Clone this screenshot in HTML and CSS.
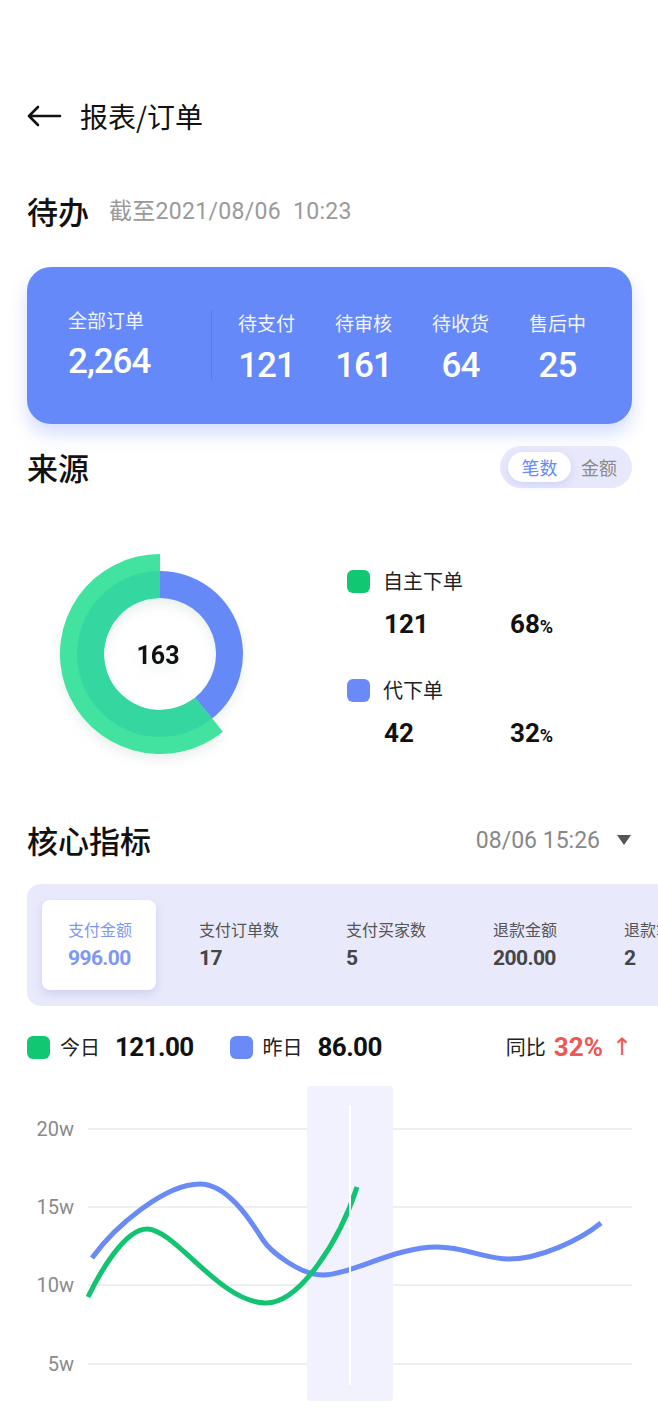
FILE: index.html
```html
<!DOCTYPE html>
<html lang="zh-CN">
<head>
<meta charset="utf-8">
<title>报表/订单</title>
<link rel="stylesheet" href="styles.css">
</head>
<body>
<div class="page">
  <header class="topbar">
    <svg class="back" width="36" height="22" viewBox="0 0 36 22"><path d="M3 11H34M12 2L3 11L12 20" fill="none" stroke="#111" stroke-width="2.6" stroke-linecap="round" stroke-linejoin="round"/></svg>
    <h1 class="topbar-title">报表/订单</h1>
  </header>

  <div class="section-head todo-head">
    <h2 class="section-title">待办</h2>
    <span class="section-sub">截至2021/08/06&nbsp;&nbsp;10:23</span>
  </div>

  <div class="todo-card">
    <div class="todo-all">
      <div class="todo-label">全部订单</div>
      <div class="todo-num">2,264</div>
    </div>
    <div class="todo-divider"></div>
    <div class="todo-cols">
      <div class="todo-col"><div class="todo-label">待支付</div><div class="todo-num">121</div></div>
      <div class="todo-col"><div class="todo-label">待审核</div><div class="todo-num">161</div></div>
      <div class="todo-col"><div class="todo-label">待收货</div><div class="todo-num">64</div></div>
      <div class="todo-col"><div class="todo-label">售后中</div><div class="todo-num">25</div></div>
    </div>
  </div>

  <div class="section-head source-head">
    <h2 class="section-title">来源</h2>
    <div class="toggle">
      <span class="toggle-item active">笔数</span>
      <span class="toggle-item">金额</span>
    </div>
  </div>

  <div class="source-body">
    <div class="donut">
      <svg width="220" height="220" viewBox="0 0 220 220">
        <path d="M172.93 187.71 A100 100 0 1 1 110 10 L110 54 A56 56 0 1 0 145.24 153.52 Z" fill="#42e3a0"/>
        <path d="M162.23 174.5 A83 83 0 1 1 110 27 L110 54 A56 56 0 1 0 145.24 153.52 Z" fill="#35d7a0"/>
        <path d="M110 27 A83 83 0 0 1 162.23 174.5 L145.24 153.52 A56 56 0 0 0 110 54 Z" fill="#6689f8"/>
      </svg>
      <span class="donut-num">163</span>
    </div>
    <div class="legend">
      <div class="legend-item">
        <div class="legend-label"><i class="swatch swatch-green"></i>自主下单</div>
        <div class="legend-values"><span class="lv-num">121</span><span class="lv-pct">68<small>%</small></span></div>
      </div>
      <div class="legend-item">
        <div class="legend-label"><i class="swatch swatch-blue"></i>代下单</div>
        <div class="legend-values"><span class="lv-num">42</span><span class="lv-pct">32<small>%</small></span></div>
      </div>
    </div>
  </div>

  <div class="section-head core-head">
    <h2 class="section-title">核心指标</h2>
    <div class="core-date">08/06 15:26<span class="caret"></span></div>
  </div>

  <div class="metrics">
    <div class="metric active"><div class="metric-label">支付金额</div><div class="metric-value">996.00</div></div>
    <div class="metric"><div class="metric-label">支付订单数</div><div class="metric-value">17</div></div>
    <div class="metric"><div class="metric-label">支付买家数</div><div class="metric-value">5</div></div>
    <div class="metric"><div class="metric-label">退款金额</div><div class="metric-value">200.00</div></div>
    <div class="metric"><div class="metric-label">退款笔数</div><div class="metric-value">2</div></div>
  </div>

  <div class="compare">
    <div class="compare-item"><i class="swatch swatch-green"></i><span class="compare-label">今日</span><span class="compare-num">121.00</span></div>
    <div class="compare-item compare-y"><i class="swatch swatch-blue"></i><span class="compare-label">昨日</span><span class="compare-num">86.00</span></div>
    <div class="compare-ratio"><span class="compare-label">同比</span><span class="ratio-num">32%</span><span class="ratio-arrow">↑</span></div>
  </div>

  <svg class="chart" width="658" height="339" viewBox="0 1086 658 339">
    <g stroke="#e9e9ec" stroke-width="1.5">
      <line x1="88" y1="1129" x2="632" y2="1129"/>
      <line x1="88" y1="1207" x2="632" y2="1207"/>
      <line x1="88" y1="1285" x2="632" y2="1285"/>
      <line x1="88" y1="1364" x2="632" y2="1364"/>
    </g>
    <g class="axis-label" fill="#8a8a8a" font-size="20" text-anchor="end">
      <text x="74" y="1136">20w</text>
      <text x="74" y="1214">15w</text>
      <text x="74" y="1292">10w</text>
      <text x="74" y="1371">5w</text>
    </g>
    <rect x="307" y="1086" width="86" height="315" rx="3" fill="#f1f2fd"/>
    <path d="M92 1258 C115 1226 165 1184 200 1184 C230 1184 255 1228 263 1240 C271 1252 300 1275 323 1275 C350 1275 395 1247 437 1247 C465 1247 485 1259 509 1259 C540 1259 580 1240 601 1223" fill="none" stroke="#6a8af6" stroke-width="5" stroke-linecap="butt"/>
    <path d="M88 1297 C100 1272 125 1229 147 1229 C175 1229 220 1303 266 1303 C300 1303 340 1240 357 1187" fill="none" stroke="#12c471" stroke-width="5" stroke-linecap="butt"/>
    <line x1="350" y1="1105" x2="350" y2="1385" stroke="#ffffff" stroke-width="2"/>
  </svg>
</div>
</body>
</html>
```

FILE: styles.css
```css
html, body {
  margin: 0;
  padding: 0;
  background: #ffffff;
}
body {
  font-family: "Noto Sans CJK SC", "Noto Sans", sans-serif;
  color: #111;
  overflow-x: hidden;
}
.page {
  padding: 0 26px 0 27px;
  width: 658px;
  box-sizing: border-box;
  overflow: hidden;
}

/* top bar */
.topbar {
  margin-top: 96px;
  height: 40px;
  display: flex;
  align-items: center;
}
.back {
  display: block;
  margin-left: -1px;
}
.topbar-title {
  margin: 0 0 0 18px;
  font-size: 28px;
  font-weight: 400;
  line-height: 40px;
  color: #111;
}

/* section heads */
.section-head {
  display: flex;
  align-items: center;
}
.section-title {
  margin: 0;
  font-size: 31px;
  font-weight: 500;
  line-height: 40px;
  color: #111;
}
.todo-head {
  margin-top: 55px;
  height: 40px;
}
.section-sub {
  margin-left: 20px;
  font-family: Roboto, "Noto Sans CJK SC", sans-serif;
  font-size: 23px;
  letter-spacing: 0.3px;
  color: #9a9a9a;
  line-height: 40px;
  padding-top: 2px;
}

/* todo card */
.todo-card {
  margin-top: 36px;
  height: 157px;
  border-radius: 24px;
  background: #6689f9;
  box-shadow: 0 10px 18px rgba(102, 137, 249, 0.28);
  display: flex;
  align-items: flex-start;
  color: #fff;
  box-sizing: border-box;
  padding-left: 41px;
}
.todo-all {
  width: 143px;
  padding-top: 41px;
}
.todo-divider {
  width: 1px;
  height: 70px;
  margin-top: 43px;
  background: #587ae6;
}
.todo-cols {
  margin-left: 6px;
  display: grid;
  grid-template-columns: repeat(4, 97px);
  padding-top: 44px;
}
.todo-col {
  text-align: center;
}
.todo-label {
  font-size: 19px;
  line-height: 24px;
  color: #f2f5ff;
}
.todo-num {
  margin-top: 10px;
  font-family: Roboto, sans-serif;
  font-size: 35px;
  font-weight: 500;
  line-height: 40px;
  letter-spacing: -1px;
}
.todo-col .todo-num {
  margin-top: 11px;
}

/* source */
.source-head {
  margin-top: 22px;
  height: 42px;
  justify-content: space-between;
}
.toggle {
  width: 132px;
  height: 42px;
  border-radius: 21px;
  background: #e7e8fb;
  display: flex;
  align-items: center;
  box-sizing: border-box;
  padding-left: 8px;
}
.toggle-item {
  font-size: 18px;
  line-height: 30px;
  color: #8a8a8a;
  padding: 0 0 0 10px;
}
.toggle-item.active {
  width: 63px;
  height: 30px;
  box-sizing: border-box;
  padding: 0;
  text-align: center;
  background: #fff;
  border-radius: 15px;
  color: #6a8af6;
  box-shadow: 0 3px 8px rgba(102, 120, 230, 0.18);
}

.source-body {
  margin-top: 56px;
  display: flex;
  align-items: flex-start;
}
.donut {
  position: relative;
  margin-left: 23px;
  width: 220px;
  height: 220px;
  filter: drop-shadow(0 6px 6px rgba(40, 120, 90, 0.10));
}
.donut svg {
  display: block;
}
.donut-num {
  position: absolute;
  left: 0;
  top: 0;
  width: 220px;
  line-height: 220px;
  text-align: center;
  font-family: Roboto, sans-serif;
  font-weight: 700;
  font-size: 25px;
  color: #111;
  margin-left: -2px;
  margin-top: 2px;
}
.legend {
  margin-left: 77px;
  padding-top: 23px;
}
.legend-item + .legend-item {
  margin-top: 31px;
}
.legend-label {
  display: flex;
  align-items: center;
  font-size: 20px;
  line-height: 28px;
  color: #222;
}
.swatch {
  display: inline-block;
  width: 23px;
  height: 23px;
  border-radius: 6px;
  flex-shrink: 0;
}
.swatch-green { background: #11c771; }
.swatch-blue { background: #6a8af7; }
.legend-label .swatch {
  margin-right: 13px;
}
.legend-values {
  margin-top: 11px;
  padding-left: 37px;
  display: flex;
  font-family: Roboto, sans-serif;
  font-weight: 700;
  font-size: 26px;
  line-height: 36px;
  color: #111;
}
.lv-num {
  width: 126px;
}
.lv-pct small {
  font-size: 18px;
  font-weight: 700;
}

/* core metrics */
.core-head {
  margin-top: 56px;
  height: 40px;
  justify-content: space-between;
}
.core-date {
  display: flex;
  align-items: center;
  font-family: Roboto, sans-serif;
  font-size: 23px;
  color: #888;
}
.caret {
  margin-left: 17px;
  width: 0;
  height: 0;
  border-left: 7px solid transparent;
  border-right: 7px solid transparent;
  border-top: 10px solid #555;
  margin-right: 1px;
}

.metrics {
  margin-top: 24px;
  margin-right: -26px;
  height: 122px;
  box-sizing: border-box;
  background: #e8e9fb;
  border-radius: 14px 0 0 14px;
  display: flex;
  align-items: flex-start;
  gap: 17px;
  padding: 16px 0 0 15px;
  overflow: hidden;
}
.metric {
  flex-shrink: 0;
  height: 90px;
  box-sizing: border-box;
  padding: 0 24px 0 26px;
  display: flex;
  flex-direction: column;
  justify-content: center;
  white-space: nowrap;
}
.metric.active {
  background: #fff;
  border-radius: 8px;
  box-shadow: 0 4px 8px rgba(100, 110, 200, 0.18);
}
.metric-label {
  font-size: 16px;
  line-height: 22px;
  color: #555;
}
.metric-value {
  margin-top: 3px;
  font-family: Roboto, sans-serif;
  font-weight: 700;
  font-size: 21px;
  letter-spacing: -0.6px;
  line-height: 30px;
  color: #454545;
}
.metric.active .metric-label,
.metric.active .metric-value {
  color: #7e98f2;
}

/* compare */
.compare {
  margin-top: 27px;
  height: 28px;
  display: flex;
  align-items: center;
}
.compare-item {
  display: flex;
  align-items: center;
}
.compare-y {
  margin-left: 36px;
}
.compare-label {
  margin-left: 10px;
  font-size: 20px;
  color: #222;
  line-height: 28px;
}
.compare-num {
  margin-left: 15px;
  font-family: Roboto, sans-serif;
  font-weight: 700;
  font-size: 26px;
  letter-spacing: -0.6px;
  line-height: 28px;
  color: #111;
}
.compare-ratio {
  margin-left: auto;
  display: flex;
  align-items: center;
}
.compare-ratio .compare-label {
  margin-left: 0;
}
.ratio-num {
  margin-left: 8px;
  font-family: Roboto, sans-serif;
  font-weight: 700;
  font-size: 26px;
  line-height: 28px;
  color: #ee5757;
}
.ratio-arrow {
  margin-left: 9px;
  font-family: "DejaVu Sans", sans-serif;
  font-size: 24px;
  line-height: 28px;
  color: #ee5757;
}

/* chart */
.chart {
  display: block;
  margin: 25px 0 0 -27px;
}
.axis-label {
  font-family: Roboto, "Noto Sans", sans-serif;
}
```
